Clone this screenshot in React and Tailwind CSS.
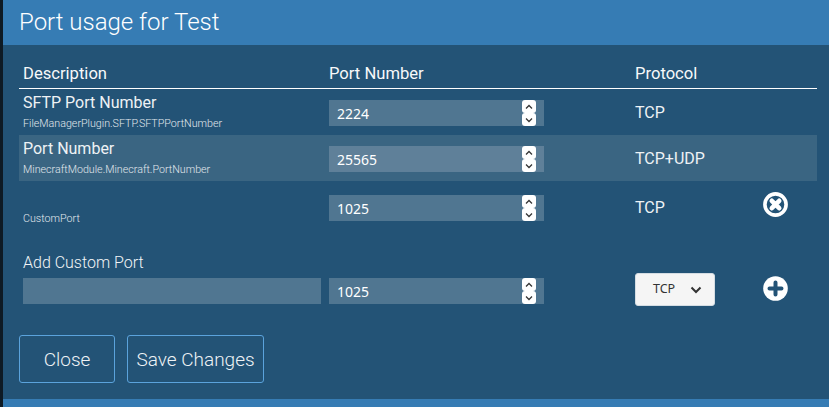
const roboto = "[font-family:Roboto,sans-serif]";

function Spinner() {
  return (
    <div className="flex flex-col w-[14px] h-[26px] shrink-0">
      <div className="h-[13px] bg-white rounded-[3px] flex items-center justify-center">
        <svg width="8" height="6" viewBox="0 0 8 6" fill="none" stroke="#363636" strokeWidth="1.3"><path d="M1 4.5 L4 1.5 L7 4.5" /></svg>
      </div>
      <div className="h-[13px] bg-white rounded-[3px] flex items-center justify-center">
        <svg width="8" height="6" viewBox="0 0 8 6" fill="none" stroke="#363636" strokeWidth="1.3"><path d="M1 1.5 L4 4.5 L7 1.5" /></svg>
      </div>
    </div>
  );
}

function PortInput({ value, light }) {
  return (
    <div className={`flex items-center justify-between w-[215px] h-[26px] pl-2 pr-2 text-[14px] text-white [font-family:'Noto_Sans',sans-serif] ${light ? "bg-[#5f8099]" : "bg-[#507691]"}`}>
      <span>{value}</span>
      <Spinner />
    </div>
  );
}

function Row({ title, sub, port, proto, highlight }) {
  return (
    <div className={`grid grid-cols-[306px_306px_120px_66px] h-[46px] ${highlight ? "bg-[#3a6582]" : ""}`}>
      <div className="pl-1 pt-[3px] flex flex-col">
        <span className="text-[16px] leading-[22px] text-[#eef2f5]">{title}</span>
        <span className="text-[10.7px] font-light leading-[14px] mt-[3px] text-[#e2e8ed]">{sub}</span>
      </div>
      <div className="pl-1 pt-[11px]"><PortInput value={port} light={highlight} /></div>
      <div className="pl-1 pt-[13px] text-[16px] leading-[22px] text-[#eef2f5]">{proto}</div>
    </div>
  );
}

export default function App() {
  return (
    <div className={`${roboto} w-[829px] h-[407px] overflow-hidden bg-[#0e1a24] pl-[3px] flex flex-col`}>
      <div className="h-[45px] shrink-0 bg-[#367cb4] pl-[16px] pb-[1px] flex items-center">
        <h1 className="text-[24px] font-light text-white leading-[30px]">Port usage for Test</h1>
      </div>
      <div className="h-[354px] shrink-0 bg-[#235376] pl-[16px] flex flex-col">
        <div className="w-[798px] grid grid-cols-[306px_306px_186px] h-[44px] pt-[19px] border-b border-white text-[16.6px] leading-[20px] text-[#f7f9fa]">
          <div className="pl-1">Description</div>
          <div className="pl-1">Port Number</div>
          <div className="pl-1">Protocol</div>
        </div>
        <div className="w-[798px] flex flex-col">
          <Row title="SFTP Port Number" sub="FileManagerPlugin.SFTP.SFTPPortNumber" port="2224" proto="TCP" />
          <Row title="Port Number" sub="MinecraftModule.Minecraft.PortNumber" port="25565" proto="TCP+UDP" highlight />
          <div className="grid grid-cols-[306px_306px_120px_66px] h-[64px]">
            <div className="pl-1 pt-[31px] text-[10.7px] font-light leading-[14px] text-[#e2e8ed]">CustomPort</div>
            <div className="pl-1 pt-[14px]"><PortInput value="1025" /></div>
            <div className="pl-1 pt-[16px] text-[16px] leading-[22px] text-[#eef2f5]">TCP</div>
            <div className="pt-[11px] pl-[12px]">
              <svg width="25" height="25" viewBox="0 0 25 25" fill="none">
                <circle cx="12.5" cy="12.5" r="10.6" stroke="white" strokeWidth="3.6" />
                <path d="M8.8 8.8 L16.2 16.2 M16.2 8.8 L8.8 16.2" stroke="white" strokeWidth="4.6" strokeLinecap="round" />
              </svg>
            </div>
          </div>
          <div className="pl-1 h-[33px] pt-[7px] text-[16px] font-light leading-[22px] text-[#f2f5f7]">Add Custom Port</div>
          <div className="grid grid-cols-[306px_306px_120px_66px] h-[37px] items-start">
            <div className="pl-1"><div className="w-[298px] h-[26px] bg-[#507691]" /></div>
            <div className="pl-1"><PortInput value="1025" /></div>
            <div className="pl-1 -mt-[5px]">
              <div className="w-[80px] h-[33px] bg-[#f5f5f5] rounded-[3px] border border-[#d5dde3] flex items-center pl-[17px] pr-[12px] justify-between text-[12.5px] text-[#333333] [font-family:'Noto_Sans',sans-serif]">
                <span>TCP</span>
                <svg width="12" height="8" viewBox="0 0 12 8" fill="none" stroke="#333333" strokeWidth="2"><path d="M1.5 1.5 L6 6 L10.5 1.5" /></svg>
              </div>
            </div>
            <div className="pl-[12px] -mt-[2px]">
              <svg width="25" height="25" viewBox="0 0 25 25">
                <circle cx="12.5" cy="12.5" r="12.3" fill="white" />
                <path d="M12.5 6.5 V18.5 M6.5 12.5 H18.5" stroke="#235376" strokeWidth="4" strokeLinecap="round" />
              </svg>
            </div>
          </div>
        </div>
        <div className="flex gap-3 mt-[20px]">
          <button className="w-[96px] h-[48px] pt-[3px] border border-[#5ba3dc] rounded-[3px] text-[19px] font-light text-[#eef2f5]">Close</button>
          <button className="w-[137px] h-[48px] pt-[3px] border border-[#5ba3dc] rounded-[3px] text-[19px] font-light text-[#eef2f5]">Save Changes</button>
        </div>
      </div>
      <div className="flex-1 bg-[#367cb4]" />
    </div>
  );
}
